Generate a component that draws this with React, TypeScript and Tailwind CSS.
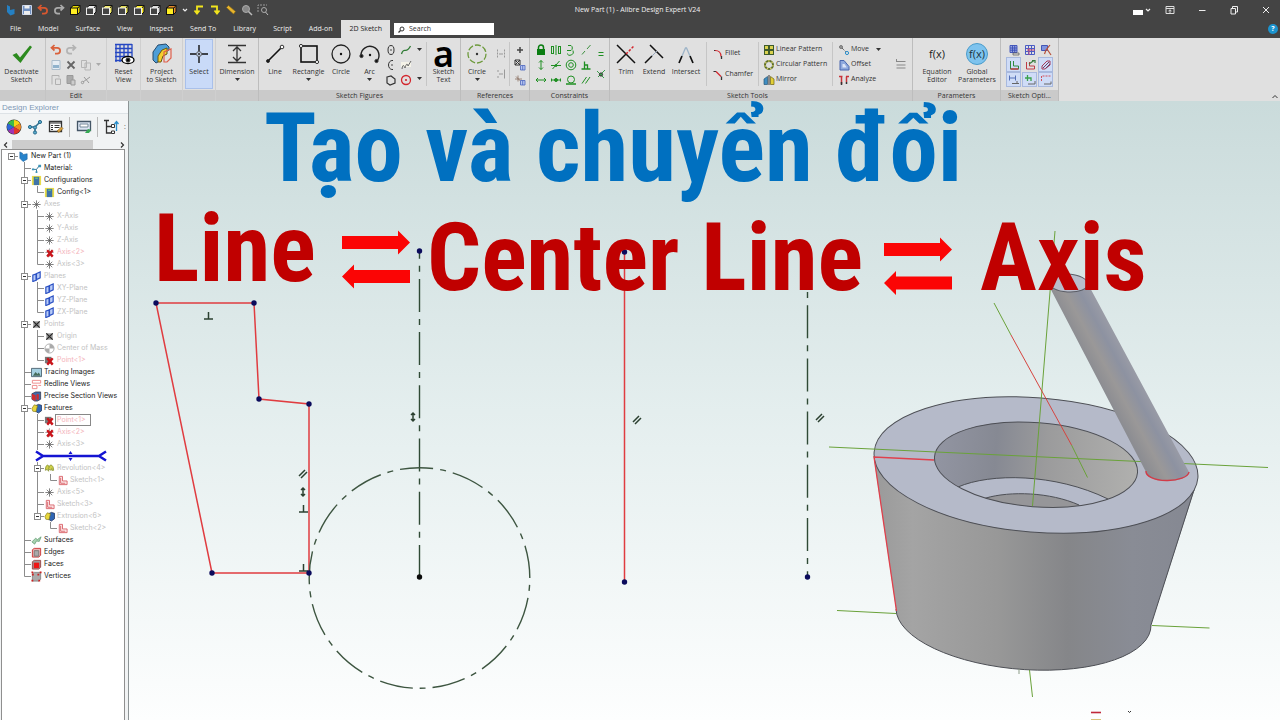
import type { ReactNode } from "react";
import clsx from "clsx";

type Kids = { children?: ReactNode };

/* ---------- icon helpers ---------- */

function Ic({ s = 12, vb = 12, children }: Kids & { s?: number; vb?: number }) {
  return (
    <svg width={s} height={s} viewBox={`0 0 ${vb} ${vb}`} fill="none" stroke="#333" aria-hidden className="shrink-0">
      {children}
    </svg>
  );
}

function Caret({ className }: { className?: string }) {
  return (
    <svg width="5" height="3" viewBox="0 0 5 3" aria-hidden className={clsx("shrink-0", className ?? "fill-[#333]")}>
      <path d="M0 0h5L2.5 3z" />
    </svg>
  );
}

function Cube({ face, top }: { face: string; top: string }) {
  return (
    <Ic>
      <path d="M4 4V1.5h7V8L8.500 10.500" fill={top} stroke="#111" />
      <path d="M1.500 4.500L4 1.500h7L8.500 4.500z" fill={top} stroke="#111" />
      <rect x="1.500" y="4" width="7" height="6.500" fill={face} stroke={face === "#444444" ? "#eee" : "#111"} />
    </Ic>
  );
}

const undo = <path d="M4.500 1L1.500 3.800l3 2.700M2 3.800h5.200a2.800 2.800 0 0 1 0 5.800H5" strokeWidth="1.700" />;
const redo = <path d="M7.500 1l3 2.800-3 2.700M10 3.800H4.800a2.800 2.800 0 0 0 0 5.800H7" strokeWidth="1.700" />;

const quickTools: [string, ReactNode][] = [
  ["Home", <Ic><path d="M2 1l3 1.500V6L9.500 5v5L5.500 11.500 2 8z" fill="#2580c3" stroke="none" /></Ic>],
  ["Save", <Ic><path d="M1.500 1.500h9v9h-9z" fill="#6f8fc0" stroke="#c9d5ea" /><path d="M3.500 1.500h5v3h-5zM3 7h6v3.500H3z" fill="#eee" stroke="none" /></Ic>],
  ["Undo", <Ic><g stroke="#d9572f">{undo}</g></Ic>],
  ["Redo", <Ic><g stroke="#aaa">{redo}</g></Ic>],
  ["Front", <Cube face="#ffee22" top="#e8d800" />],
  ["Back", <Cube face="#444444" top="#eeeeee" />],
  ["Left", <Cube face="#444444" top="#f3e96b" />],
  ["Right", <Cube face="#444444" top="#e6de55" />],
  ["Top", <Cube face="#444444" top="#ffee22" />],
  ["Bottom", <Cube face="#444444" top="#dddddd" />],
  ["Isometric", <Cube face="#ffee22" top="#e58a2b" />],
];

const quickTools2: [string, ReactNode][] = [
  ["Rotate left", <Ic><path d="M10 2.500H4V9M1.500 6.500L4 9.500l2.500-3" stroke="#f2e51d" strokeWidth="1.800" /></Ic>],
  ["Rotate right", <Ic><path d="M2 2.500h6V9M5.500 6.500L8 9.500l2.500-3" stroke="#f2e51d" strokeWidth="1.800" /></Ic>],
  ["Measure", <Ic><path d="M1.500 3.500l2-2 7 6-2 2.500z" fill="#e9b52d" stroke="#8a6a12" strokeWidth=".6" /></Ic>],
  ["Zoom", <Ic><circle cx="5" cy="5" r="3.500" fill="#888" stroke="#aaa" /><path d="M7.500 7.500L11 11" stroke="#bbb" strokeWidth="1.500" /></Ic>],
  ["Zoom window", <Ic><path d="M1 8V1h9" stroke="#999" strokeDasharray="2 1" /><circle cx="7" cy="6" r="2.500" stroke="#aaa" /><path d="M8.500 8L11 11" stroke="#bbb" /></Ic>],
];

/* ---------- ribbon building blocks ---------- */

function Group({ label, className, children }: Kids & { label?: string; className: string }) {
  return (
    <div className={clsx("flex shrink-0 flex-col", className)}>
      <div className="flex h-[52px]">{children}</div>
      <div className="h-[11px] truncate bg-[#cacaca] text-center leading-[11px]">{label}</div>
    </div>
  );
}

function Big({ icon, label, caret, active, className }: {
  icon: ReactNode; label: string; caret?: boolean; active?: boolean; className: string;
}) {
  return (
    <button
      type="button"
      className={clsx(
        "flex shrink-0 flex-col items-center whitespace-pre pt-1 text-center leading-[8px]",
        active && "my-px bg-[#c9daf8] pt-[3px] outline outline-1 -outline-offset-1 outline-[#a9c0ea]",
        className,
      )}
    >
      {icon}
      <span className="mt-0.5">{label}</span>
      {caret && <Caret className="mt-0.5 fill-[#333]" />}
    </button>
  );
}

function Small({ name, on, children }: Kids & { name: string; on?: boolean }) {
  return (
    <button
      type="button"
      aria-label={name}
      className={clsx(
        "flex h-[15px] w-[15px] items-center justify-center",
        on && "bg-[#cfdcf7] outline outline-1 -outline-offset-1 outline-[#a8b9de]",
      )}
    >
      {children}
    </button>
  );
}

function Wide({ icon, label, caret }: { icon: ReactNode; label: string; caret?: boolean }) {
  return (
    <button type="button" className="flex h-[15px] items-center gap-px whitespace-nowrap">
      {icon}
      <span>{label}</span>
      {caret && <Caret className="ml-1.5 fill-[#333]" />}
    </button>
  );
}

const Sep = () => <div className="my-1 w-px shrink-0 bg-[#c6c6c6]" />;

const green = "#1f8f22";

const constraints: [string, ReactNode][] = [
  ["Fix", <Ic><rect x="2" y="5" width="8" height="6" fill="#0a7d12" stroke="none" /><path d="M3.500 5V3.500a2.500 2.500 0 0 1 5 0V5" stroke="#0a7d12" strokeWidth="1.500" /></Ic>],
  ["Symmetric", <Ic><g stroke={green}><path d="M6 1v10" /><rect x="1.500" y="2.500" width="2" height="7" /><rect x="8.500" y="2.500" width="2" height="7" /></g></Ic>],
  ["Tangent", <Ic><g stroke={green}><path d="M3 1.500h3a3 3 0 0 1 0 5H2M8 6.500a3 3 0 0 1-6 3" /></g></Ic>],
  ["Collinear", <Ic><g stroke="#3c8f3e"><path d="M2 10.500L5 7M7 5l3.500-4" /></g></Ic>],
  ["Vertical", <Ic><g stroke={green}><path d="M6 1.500v9M4 3.500L6 1.500l2 2M4 8.500l2 2 2-2" /></g></Ic>],
  ["Coincident", <Ic><g stroke={green}><path d="M1 6.500h10M2.500 10l7-8" /><circle cx="6" cy="6.500" r="1" fill={green} /></g></Ic>],
  ["Concentric", <Ic><g stroke={green}><circle cx="6" cy="6" r="4.800" /><circle cx="6" cy="6" r="2.300" /></g></Ic>],
  ["Perpendicular", <Ic><g stroke={green} strokeWidth="1.300"><path d="M1.500 10h9M4.500 10V2.500M4.500 6h3v4" /></g></Ic>],
  ["Horizontal", <Ic><g stroke={green}><path d="M1 6h10M3 4L1 6l2 2M9 4l2 2-2 2" /></g></Ic>],
  ["Midpoint", <Ic><g stroke={green}><path d="M1 6h10" /><circle cx="6" cy="6" r="1.500" fill={green} /><path d="M1.500 4.500v3M10.500 4.500v3" /></g></Ic>],
  ["Tangent arc", <Ic><g stroke={green}><circle cx="6" cy="5.500" r="3.500" /><path d="M1 10h10" strokeWidth="1.500" /></g></Ic>],
  ["Parallel", <Ic><g stroke={green}><path d="M2 9.500L6.500 3M5.500 9.500L10 3" /></g></Ic>],
];

const netIcon = (line: string) => (
  <Ic>
    <path d="M2 1.500h7v7H2zM2 4h7M2 6.200h7M4.500 1.500v7M6.700 1.500v7" stroke={line} strokeWidth=".9" fill="#9aa6de" />
    <path d="M5 9h6v2H5z" stroke="#555" strokeWidth=".7" fill="#ddd" />
  </Ic>
);

const options: [string, boolean, ReactNode][] = [
  ["Snap to grid", false, netIcon("#3a4fb8")],
  ["Show grid", false, <Ic><path d="M1.500 1.500h9v9h-9zM1.500 4.500h9M1.500 7.500h9M4.500 1.500v9M7.500 1.500v9" stroke="#4b5cc4" /><path d="M5 4v7M3 6h8" stroke="#c04a7c" /></Ic>],
  ["Snap", false, <Ic><path d="M1.500 1.500h6v5h-6z" fill="#7f94df" stroke="#4356b5" /><path d="M10 1L6 6l-1.500 4M7 5l4 6" stroke="#b8503a" strokeWidth="1.200" /></Ic>],
  ["Figure display", true, <Ic><path d="M2.500 2v8h8V7h-5V2" stroke="#2d8a3d" /><path d="M2.500 10h8" stroke="#c03a44" strokeWidth="1.400" /></Ic>],
  ["Open ends", false, <Ic><path d="M2.500 3v7h8V7h-5V3" stroke="#c03a44" /><path d="M5 5l5-3.500M8 1.500h3V4" stroke="#3a7d3f" strokeWidth="1.200" /></Ic>],
  ["Hatching", true, <Ic><path d="M2 10V7l5-5h3v4l-5 4z" stroke="#a33a5a" /><path d="M3 9l6-6M6 9l4-4" stroke="#6b3f6b" /></Ic>],
  ["Dimensions", true, <Ic><path d="M1.500 1.500v5M7.500 1.500v5M1.500 4h6" stroke="#5571b8" /><path d="M4 9.500h7M9 7v3" stroke="#666" /></Ic>],
  ["Constraints", true, <Ic><path d="M3.500 1v6M1 4h6v3" stroke="#3aa24b" strokeWidth="1.300" /><path d="M4 10h7V7" stroke="#666" /></Ic>],
  ["Nodes", true, <Ic><path d="M1.500 7V2h9" stroke="#d0525c" strokeDasharray="2 1" /><path d="M4 10h7V7.500" stroke="#666" /></Ic>],
];

function Ribbon() {
  return (
    <div className="flex bg-[#e0e0e0]" role="toolbar" aria-label="2D Sketch">
      <Group className="w-[45px]">
        <Big className="w-[43px]" label={"Deactivate\nSketch"} icon={<Ic s={24} vb={24}><path d="M2.500 13l4-2 3.500 4.500L20 3.500l2 1.500L10.500 21z" fill="#2c8a1e" stroke="none" /></Ic>} />
      </Group>
      <div className="w-px bg-[#c4c4c4]" />
      <Group className="w-[60px]" label="Edit">
        <div className="grid grid-cols-3 content-start pl-[2px] pt-1">
          <Small name="Undo"><Ic><g stroke="#d9603a">{undo}</g></Ic></Small>
          <Small name="Redo"><Ic><g stroke="#b3b3b3">{redo}</g></Ic></Small>
          <span />
          <Small name="Properties"><Ic><path d="M2 1.500h8v9H2z" fill="#e4ecf3" stroke="#aabccb" /><path d="M3 6h6v3H3z" fill="#8fb2cc" stroke="none" /></Ic></Small>
          <Small name="Delete"><Ic><path d="M2.500 2.500l7 7M9.500 2.500l-7 7" stroke="#666" strokeWidth="1.800" /></Ic></Small>
          <Small name="Copy"><Ic><path d="M1.500 1.500h5v7h-5zM5 4h5.500v7H5z" fill="#e0e0e0" stroke="#b5b5b5" /></Ic></Small>
          <Small name="Paste"><Ic><path d="M2 10.500V1.500h7v2M5.500 5h5v5.500h-5z" stroke="#b0b0b0" /></Ic></Small>
          <Small name="Paste special"><Ic><path d="M2 1.500h6v8H2z" fill="#aaa" stroke="#999" /><path d="M6 6h4v5H6z" fill="#ccc" stroke="#999" /></Ic></Small>
          <Small name="Cut"><Ic><path d="M10 3L3 8M4 3l5 6" stroke="#999" /><circle cx="2.500" cy="8.500" r="1.200" stroke="#999" /></Ic></Small>
        </div>
        <Caret className="ml-[3px] mt-[25px] fill-[#aaa]" />
      </Group>
      <div className="w-px bg-[#cfcfcf]" />
      <Group className="w-[33px]">
        <Big className="w-full" label={"Reset\nView"} icon={
          <Ic s={24} vb={24}>
            <path d="M3 2.500h17M3 6.500h17M3 10.500h17M3 14.500h12M3 18.500h8M4 2v18M8 2v18M12 2v14M16 2v13M20 2v13" stroke="#2446c2" strokeWidth="1.300" />
            <ellipse cx="16" cy="18" rx="6" ry="3.500" fill="#fff" stroke="#000" strokeWidth="1.300" /><circle cx="16" cy="18" r="2" fill="#000" />
          </Ic>} />
      </Group>
      <div className="w-px bg-[#cfcfcf]" />
      <Group className="w-[41px]">
        <Big className="w-full" label={"Project\nto Sketch"} icon={
          <Ic s={24} vb={24}>
            <path d="M3 18V10l5-7 8-1 3 3v3l-6 3-5 9-2 1z" fill="#4d9ed8" stroke="#274a6b" />
            <path d="M8 20V14l4-6 5-2v6l-4 2-2 6z" fill="#f5cf2f" stroke="#6a5a10" />
            <path d="M14 20V10l7-3v9l-4 4z" stroke="#e0604c" strokeWidth="1.200" />
          </Ic>} />
      </Group>
      <div className="w-px bg-[#cfcfcf]" />
      <Group className="w-[32px]">
        <Big active className="mx-0.5 w-[28px]" label="Select" icon={
          <Ic s={24} vb={24}><path d="M12 3v6M12 15v6M3 12h6M15 12h6" stroke="#111" strokeWidth="1.400" /><circle cx="12" cy="12" r="2.500" stroke="#555" /><circle cx="12" cy="12" r=".7" fill="#333" /></Ic>} />
      </Group>
      <div className="w-px bg-[#cfcfcf]" />
      <Group className="w-[42px]">
        <Big className="w-full" label="Dimension" caret icon={
          <Ic s={24} vb={24}><path d="M3 3.500h18M3 20.500h18M12 5v14M8 9l4-4 4 4M8 15l4 4 4-4" stroke="#333" strokeWidth="1.300" /></Ic>} />
      </Group>
      <div className="w-px bg-[#bdbdbd]" />

      <Group className="w-[201px]" label="Sketch Figures">
        <Big className="w-[32px]" label="Line" icon={<Ic s={24} vb={24}><path d="M5 19L19 5" stroke="#111" strokeWidth="1.600" /><circle cx="5" cy="19" r="1.500" fill="#111" /><circle cx="19" cy="5" r="1.800" fill="#fff" /></Ic>} />
        <Big className="w-[35px]" label="Rectangle" caret icon={<Ic s={24} vb={24}><rect x="4" y="4" width="16" height="16" stroke="#111" strokeWidth="1.600" /><circle cx="4" cy="4" r="1.600" fill="#fff" /><circle cx="20" cy="20" r="1.600" fill="#fff" /></Ic>} />
        <Big className="w-[30px]" label="Circle" icon={<Ic s={24} vb={24}><circle cx="12" cy="12" r="9" stroke="#222" strokeWidth="1.300" /><circle cx="12" cy="12" r="1.200" fill="#111" stroke="none" /></Ic>} />
        <Big className="w-[27px]" label="Arc" caret icon={<Ic s={24} vb={24}><path d="M3 13a9 9 0 1 1 16 6" stroke="#222" strokeWidth="1.400" /><circle cx="3.500" cy="14" r="1.600" fill="#111" /><circle cx="18.500" cy="19" r="1.600" fill="#111" /><circle cx="12" cy="13" r="1.200" fill="#111" stroke="none" /></Ic>} />
        <div className="grid grid-cols-2 content-start pt-1">
          <Small name="Ellipse"><Ic><ellipse cx="6" cy="6" rx="3" ry="4.500" /><circle cx="6" cy="6" r=".8" fill="#333" stroke="none" /></Ic></Small>
          <Small name="Spline"><Ic><path d="M1.500 10C4 2 6 11 10.500 2" stroke="#2f7b35" strokeWidth="1.300" /></Ic></Small>
          <Small name="Elliptical arc"><Ic><path d="M8 1.500C2 1 2 11 8 10.500" /><circle cx="7" cy="6" r=".8" fill="#333" stroke="none" /></Ic></Small>
          <Small name="Sketch image"><Ic><path d="M1 3h10v5H1z" fill="#f5f3e8" stroke="none" /><path d="M2 10c1-6 2-3 3-1 1-3 2-6 3-2l3-5" stroke="#666" /></Ic></Small>
          <Small name="Polygon"><Ic><path d="M2 3l4-1 4 3v4l-5 2-3-2z" strokeWidth="1.200" /></Ic></Small>
          <Small name="Point"><Ic><circle cx="6" cy="6" r="4.500" stroke="#d3262d" strokeWidth="1.300" /><circle cx="6" cy="6" r="1.100" fill="#d3262d" stroke="none" /></Ic></Small>
        </div>
        <div className="flex w-[13px] flex-col items-center justify-between py-[10px]"><Caret /><Caret /></div>
        <Sep />
        <Big className="w-[33px]" label={"Sketch\nText"} icon={<span className="h-6 font-['Noto_Sans','Open_Sans',sans-serif] text-[36px] font-semibold leading-[23px] text-black">a</span>} />
      </Group>
      <div className="w-px bg-[#bdbdbd]" />

      <Group className="w-[68px]" label="References">
        <Big className="w-[32px]" label="Circle" caret icon={<Ic s={24} vb={24}><circle cx="12" cy="12" r="9" stroke="#6d9a3c" strokeWidth="1.300" strokeDasharray="6 2" /><circle cx="12" cy="12" r="1.200" fill="#333" stroke="none" /></Ic>} />
        <div className="flex w-[16px] flex-col items-center gap-[5px] pt-2">
          <Small name="Reference line"><Ic><path d="M2.500 1.500v9M9.500 1.500v9" stroke="#999" strokeDasharray="2 1" /><path d="M4 6h4" stroke="#999" /></Ic></Small>
          <Small name="Reference node"><Ic><path d="M2 3h2M2 9h2M9.500 1.500v9" stroke="#999" /><path d="M4 6h4" stroke="#999" /></Ic></Small>
        </div>
        <Sep />
        <div className="flex w-[19px] flex-col items-center pt-1">
          <Small name="Node"><Ic><path d="M6 3v6M3 6h6" stroke="#444" strokeWidth="1.500" /></Ic></Small>
          <Small name="Project point"><Ic><path d="M1 1h5v5H1zM1 1l5 5M6 1L1 6" stroke="#333" /><path d="M6.500 6.500h4.500v4.500H6.500zM8.700 6.500v4.500" fill="#b8c6f0" stroke="#4a64be" strokeWidth=".8" /></Ic></Small>
          <Small name="Project axis"><Ic><path d="M1 5h7M4 1.500v6M2 2.500l5 5" stroke="#8a6e60" strokeWidth=".8" /><path d="M6.500 6.500h4.500v4.500H6.500zM8.700 6.500v4.500" fill="#b8c6f0" stroke="#4a64be" strokeWidth=".8" /></Ic></Small>
        </div>
      </Group>
      <div className="w-px bg-[#bdbdbd]" />

      <Group className="w-[79px]" label="Constraints">
        <div className="grid grid-cols-4 content-start pl-[3px] pt-1">
          {constraints.map(([name, icon]) => <Small key={name} name={name}>{icon}</Small>)}
        </div>
        <div className="flex flex-col items-center gap-[5px] pt-2">
          <Small name="Equal"><Ic><path d="M3.500 4.500h5M3.500 7.500h5" stroke={green} strokeWidth="1.200" /></Ic></Small>
          <Small name="Auto constrain"><Ic><path d="M2 3l7 7M10 2L3 9" stroke="#3aa04a" /><circle cx="6" cy="6.500" r="1.600" fill="#3aa04a" /></Ic></Small>
        </div>
      </Group>
      <div className="w-px bg-[#bdbdbd]" />

      <Group className="w-[275px]" label="Sketch Tools">
        <Big className="w-[32px]" label="Trim" icon={<Ic s={24} vb={24}><path d="M3 3l18 18M3 21l9-9" stroke="#111" strokeWidth="1.500" /><path d="M12 12l8-8" stroke="#d3262d" strokeWidth="1.500" strokeDasharray="2.500 1.500" /></Ic>} />
        <Big className="w-[24px]" label="Extend" icon={<Ic s={24} vb={24}><path d="M8 3l13 13M3 21l7-7" stroke="#111" strokeWidth="1.500" /><path d="M10 14l5-5" stroke="#9aaac0" /></Ic>} />
        <Big className="w-[40px]" label="Intersect" icon={<Ic s={24} vb={24}><path d="M5 21l3-7M19 21l-3-7" stroke="#111" strokeWidth="1.700" /><path d="M8 14l3.500-8h1L16 14" stroke="#9db4c8" strokeWidth="1.300" /></Ic>} />
        <Sep />
        <div className="flex w-[51px] flex-col gap-[6px] pl-[5px] pt-2">
          <Wide label="Fillet" icon={<Ic><path d="M2 2.500h2" /><path d="M3 2.500c4 0 6 2 6 6" stroke="#d3262d" strokeWidth="1.200" /><path d="M9.500 8v3" strokeWidth="1.300" /></Ic>} />
          <Wide label="Chamfer" icon={<Ic><path d="M1.500 2.500H4" /><path d="M4 2.500l5 5" stroke="#d3262d" strokeWidth="1.200" /><path d="M9.500 7.500v3.500" strokeWidth="1.300" /></Ic>} />
        </div>
        <Sep />
        <div className="flex w-[73px] flex-col pl-1 pt-1">
          <Wide label="Linear Pattern" icon={<Ic><path d="M1 1h10v10H1z" fill="#3d5a2c" stroke="none" /><path d="M2 2h3v3H2zM7 2h3v3H7zM2 7h3v3H2zM7 7h3v3H7z" fill="#d9d14e" stroke="none" /></Ic>} />
          <Wide label="Circular Pattern" icon={<Ic><circle cx="6" cy="6" r="4" stroke="#5b6b2a" strokeWidth="2" /><circle cx="6" cy="6" r="4" stroke="#d6d267" strokeWidth="1.300" strokeDasharray="1.500 2" /></Ic>} />
          <Wide label="Mirror" icon={<Ic><path d="M1 10.500V5l3.500-2.500v8z" fill="#3f8dc2" stroke="#275877" strokeWidth=".7" /><path d="M6 1v10" /><path d="M11 10.500V5L7.500 2.500v8z" fill="#e2cf36" stroke="#6b6215" strokeWidth=".7" /></Ic>} />
        </div>
        <Sep />
        <div className="flex flex-col pl-[5px] pt-1">
          <Wide label="Move" caret icon={<Ic><circle cx="3" cy="3" r="1.500" fill="#999" stroke="#777" /><path d="M4 4l4 4" strokeDasharray="1 1" /><circle cx="9" cy="9" r="1.600" stroke="#2b8fcb" /></Ic>} />
          <Wide label="Offset" icon={<Ic><path d="M2 1.500h4l5 6v3.500H2z" fill="#8fa9dd" stroke="#4a67ae" /><path d="M4.500 5h2l2 3v.5h-4z" fill="#dde5f8" stroke="none" /></Ic>} />
          <Wide label="Analyze" icon={<Ic><path d="M1 2.500h3.500M3.500 2.500V10M8 2.500h3M8.500 2.500V8" stroke="#c8343a" strokeWidth="1.500" /><path d="M3.500 8v3M8.500 8v2" strokeWidth="1.500" /></Ic>} />
        </div>
      </Group>
      <Group className="w-[27px]">
        <div className="flex w-full items-center justify-end pr-1">
          <Small name="Align"><Ic><path d="M1.500 1v3M1.500 3.500h9M1.500 7h9M1.500 10h9" stroke="#888" /></Ic></Small>
        </div>
      </Group>
      <div className="w-px bg-[#bdbdbd]" />

      <Group className="w-[87px]" label="Parameters">
        <Big className="ml-1 w-[40px]" label={"Equation\nEditor"} icon={<span className="h-6 text-[11px] leading-[24px] text-[#222]">f(x)</span>} />
        <Big className="w-[40px]" label={"Global\nParameters"} icon={<span className="h-6 py-px"><span className="block h-[22px] w-[22px] rounded-full border border-[#4a9ccb] bg-[#7ec3ee] text-[11px] leading-[20px] text-[#1c3340]">f(x)</span></span>} />
      </Group>
      <div className="w-px bg-[#bdbdbd]" />
      <Group className="w-[57px]" label="Sketch Opti...">
        <div className="grid grid-cols-3 content-start gap-x-px pl-[5px] pt-1">
          {options.map(([name, on, icon]) => <Small key={name} name={name} on={on}>{icon}</Small>)}
        </div>
      </Group>
      <div className="w-px bg-[#bdbdbd]" />
      <div className="flex flex-1 items-end justify-end pr-px">
        <button type="button" aria-label="Collapse ribbon"><Ic s={8} vb={8}><path d="M1.500 5L4 2.500 6.500 5" /></Ic></button>
      </div>
    </div>
  );
}

/* ---------- window header ---------- */

const tabs = ["File", "Model", "Surface", "View", "Inspect", "Send To", "Library", "Script", "Add-on", "2D Sketch"];

function TitleBar() {
  return (
    <header className="bg-[#444444] text-[#f0f0f0]">
      <div className="flex h-5 items-center">
        <div className="flex flex-1 items-center pl-[3px]">
          {quickTools.map(([name, icon]) => (
            <button key={name} type="button" aria-label={name} className="flex w-4 justify-center">{icon}</button>
          ))}
          <button type="button" aria-label="Customize" className="flex w-3 justify-center"><Ic s={8} vb={8}><path d="M2 3l2 2 2-2" stroke="#eee" strokeWidth="1.200" /></Ic></button>
          {quickTools2.map(([name, icon]) => (
            <button key={name} type="button" aria-label={name} className="flex w-4 justify-center">{icon}</button>
          ))}
        </div>
        <h1>New Part (1) - Alibre Design Expert V24</h1>
        <div className="flex flex-1 items-center justify-end gap-5 pr-2">
          <button type="button" aria-label="Style" className="flex items-center">
            <span className="mt-1 block h-[5px] w-2.5 bg-white" />
            <Ic s={9} vb={9}><path d="M3 3l2 2 2-2" stroke="#eee" strokeWidth="1.200" /></Ic>
          </button>
          <button type="button" aria-label="Ribbon display" className="-ml-2"><Ic><path d="M2 2.500h8v7H2zM2 4.500h8M6 9V6M4.500 7L6 5.800 7.500 7" stroke="#ddd" /></Ic></button>
          <button type="button" aria-label="Minimize"><Ic><path d="M3 6.500h6.500" stroke="#eee" /></Ic></button>
          <button type="button" aria-label="Restore"><Ic><path d="M3 4.500h4.500V10H3zM4.500 4V2.500H9.500V8H8" stroke="#eee" /></Ic></button>
          <button type="button" aria-label="Close"><Ic><path d="M3 3l6 6M9 3L3 9" stroke="#eee" /></Ic></button>
        </div>
      </div>
      <div className="flex h-[18px] items-stretch pl-0.5">
        <nav className="flex gap-px" aria-label="Ribbon tabs">
          {tabs.map((t) => (
            <button key={t} type="button" className={clsx("px-2 leading-[18px]", t === "2D Sketch" && "bg-[#e0e0e0] text-[#222]")}>
              {t}
            </button>
          ))}
        </nav>
        <label className="my-[3px] ml-1 flex w-[100px] items-center gap-1 bg-white px-1">
          <Ic s={7} vb={7}><circle cx="4" cy="3" r="2" /><path d="M2.500 4.500L.5 6.500" strokeWidth="1.300" /></Ic>
          <input type="text" aria-label="Search" placeholder="Search" className="w-full bg-transparent text-[7px] text-black outline-none placeholder:text-[#333]" />
        </label>
        <button type="button" aria-label="Help" className="my-auto ml-auto mr-0.5 h-2.5 w-2.5 rounded-full bg-[#1c94cf] text-[7px] font-bold leading-[10px] text-white">?</button>
      </div>
    </header>
  );
}

/* ---------- design explorer ---------- */

const axis = (c = "#555") => <path d="M6 1.500v9M1.500 6h9M3 3l6 6M9 3l-6 6" stroke={c} strokeWidth=".8" />;
const cross = <path d="M3.500 3.500l6 7M9.500 3.500l-6 7" stroke="#c9151b" strokeWidth="2.600" />;

const treeIcons: Record<string, ReactNode> = {
  part: <path d="M2 1l3 1.500V4l5-1v6l-4.500 2.500L2 8z" fill="#2683cb" stroke="#17609c" strokeWidth=".6" />,
  material: <><path d="M2 7h4l3-4M6 7v3" stroke="#2f7392" /><path d="M1 6h2.500v2H1zM8 2h3v2.500H8zM5 9h2v2H5z" fill="#3d93b8" stroke="none" /></>,
  config: <><path d="M1 1h10v10H1z" fill="#e8dc4a" stroke="none" /><path d="M3 2h6v9H3z" fill="#3f74a8" stroke="none" /><path d="M4.500 3.500h3" stroke="#7be06a" /></>,
  axis: axis(),
  axisX: <>{axis("#888")}{cross}</>,
  plane: <><path d="M2 4.500L6 3v7l-4 1.500zM5.500 3L10 1v6.500L5.500 9.500z" fill="#b9ccf7" stroke="#2c52c4" strokeWidth="1.300" /></>,
  point: <><path d="M2.500 2.500h7v7h-7z" fill="#999" stroke="none" /><path d="M2.500 2.500l7 7M9.500 2.500l-7 7" stroke="#222" strokeWidth="1.200" /></>,
  pointX: <><path d="M1 2h7v7H1z" fill="#777" stroke="none" />{cross}</>,
  mass: <><circle cx="6" cy="6" r="5" fill="#fff" stroke="#aaa" /><path d="M6 1a5 5 0 0 1 5 5H6zM6 11a5 5 0 0 1-5-5h5z" fill="#aaa" stroke="none" /></>,
  image: <><path d="M.500 1.500h11v9H.500z" fill="#a5cfe0" stroke="#4d6472" /><path d="M2 9.500l3-4 2 2 1.500-1.500 2 3.500z" fill="#466b5b" stroke="none" /></>,
  redline: <path d="M1.500 1.500h9v3h-9zM1.500 7h5v3.500h-5zM8 7h3" stroke="#e88" />,
  section: <><path d="M1 3l4-2h5.500v8L7 11H4L1 9z" fill="#3f6aa8" stroke="#223" strokeWidth=".7" /><path d="M1 3l4 1.500V11L1 9z" fill="#d32c2c" stroke="none" /><path d="M6 3.500h2.500v6H6z" fill="#d32c2c" stroke="none" /></>,
  feature: <><path d="M5 3l3-1.500 3.500 1v6L8 11 5 9z" fill="#2f66b5" stroke="#1a2c55" strokeWidth=".8" /><path d="M1 6l2.500-4L7 3 5.500 9.500 2 9z" fill="#e7d63c" stroke="#85781a" strokeWidth=".7" /></>,
  revolve: <path d="M1.500 8c0-7 4-7 4-3 0-4 5-4 5 3L8.500 8V6L7 8 5 6v3L3.500 7z" fill="#cfd04a" stroke="#7f8a2c" strokeWidth=".8" />,
  sketch: <><path d="M2.500 1.500h3.500v5h5v4h-8.500z" fill="#fdeaea" stroke="#d9646a" /><path d="M4 3v6h5" stroke="#d9646a" /></>,
  surface: <path d="M1 7.500l4-4 2 1.500 4-3-2 5-3-.500L4 10z" fill="#a9d3b1" stroke="#5f9a70" strokeWidth=".8" />,
  edges: <><path d="M1.500 3l2-1.500h7V9l-2 2h-7z" fill="#ecb5b5" stroke="#c33" /><path d="M3.500 4h5v6h-5z" fill="#aaa" stroke="#777" /></>,
  faces: <><path d="M1.500 3l2-1.500h7V9l-2 2h-7z" fill="#999" stroke="#944" /><path d="M3 4h6v6H3z" fill="#f01414" stroke="none" /></>,
  vertices: <><path d="M1.500 3l2-1.500h7V9l-2 2h-7z" fill="#aaa" stroke="#888" /><path d="M1.500 1.500h0M10.500 1.500h0M1.500 10.500h0M9 10.500h0M2 4h0M8 4h0" stroke="#c22" strokeWidth="2" strokeLinecap="square" /></>,
};

type Tone = "normal" | "dim" | "error";
type TreeNode = { label: string; icon: string; tone?: Tone; selected?: boolean; kids?: TreeNode[] };

const tones: Record<Tone, string> = {
  normal: "text-[#222]",
  dim: "text-[#c2c2c2]",
  error: "text-[#f4b4bb]",
};

const tree: TreeNode = {
  label: "New Part (1)", icon: "part", kids: [
    { label: "Material:", icon: "material" },
    { label: "Configurations", icon: "config", kids: [{ label: "Config<1>", icon: "config" }] },
    { label: "Axes", icon: "axis", tone: "dim", kids: [
      { label: "X-Axis", icon: "axis", tone: "dim" },
      { label: "Y-Axis", icon: "axis", tone: "dim" },
      { label: "Z-Axis", icon: "axis", tone: "dim" },
      { label: "Axis<2>", icon: "axisX", tone: "error" },
      { label: "Axis<3>", icon: "axis", tone: "dim" },
    ] },
    { label: "Planes", icon: "plane", tone: "dim", kids: [
      { label: "XY-Plane", icon: "plane", tone: "dim" },
      { label: "YZ-Plane", icon: "plane", tone: "dim" },
      { label: "ZX-Plane", icon: "plane", tone: "dim" },
    ] },
    { label: "Points", icon: "point", tone: "dim", kids: [
      { label: "Origin", icon: "point", tone: "dim" },
      { label: "Center of Mass", icon: "mass", tone: "dim" },
      { label: "Point<1>", icon: "pointX", tone: "error" },
    ] },
    { label: "Tracing Images", icon: "image" },
    { label: "Redline Views", icon: "redline" },
    { label: "Precise Section Views", icon: "section" },
    { label: "Features", icon: "feature", kids: [
      { label: "Point<1>", icon: "pointX", tone: "error", selected: true },
      { label: "Axis<2>", icon: "axisX", tone: "error" },
      { label: "Axis<3>", icon: "axis", tone: "dim" },
      { label: "", icon: "rollback" },
      { label: "Revolution<4>", icon: "revolve", tone: "dim", kids: [{ label: "Sketch<1>", icon: "sketch", tone: "dim" }] },
      { label: "Axis<5>", icon: "axis", tone: "dim" },
      { label: "Sketch<3>", icon: "sketch", tone: "dim" },
      { label: "Extrusion<6>", icon: "feature", tone: "dim", kids: [{ label: "Sketch<2>", icon: "sketch", tone: "dim" }] },
    ] },
    { label: "Surfaces", icon: "surface" },
    { label: "Edges", icon: "edges" },
    { label: "Faces", icon: "faces" },
    { label: "Vertices", icon: "vertices" },
  ],
};

function Guide({ d, box }: { d: string; box?: boolean }) {
  return (
    <svg width="13" height="12" viewBox="0 0 13 12" fill="none" stroke="#8c8c8c" aria-hidden className="shrink-0">
      <path d={d} />
      {box && <><rect x="3.500" y="3.500" width="6" height="6" fill="#fff" /><path d="M5 6.500h3" stroke="#333" /></>}
    </svg>
  );
}

// `trail` says, for every ancestor level, whether its guide line runs on below.
function Branch({ node, trail, last, root }: { node: TreeNode; trail: boolean[]; last: boolean; root?: boolean }) {
  const own = root ? "M6.500 6.500h6.500" : last ? "M6.500 0v6.500h6.500" : "M6.500 0v12M6.500 6.500h6.500";
  return (
    <li>
      <div className="flex h-3 items-center">
        {trail.map((on, i) => <Guide key={i} d={on ? "M6.500 0v12" : ""} />)}
        {node.icon === "rollback" ? (
          <svg width="74" height="12" viewBox="0 0 74 12" fill="none" stroke="#1414d2" strokeWidth="2.500" className="ml-1" aria-hidden>
            <path d="M1 1.500L8 6l-7 4.500M71 1.500L64 6l7 4.500M6 6h60" />
            <path d="M33.500 4L35.500 1l2 3zM33.500 8l2 3 2-3z" fill="#1414d2" stroke="none" />
          </svg>
        ) : (
          <>
            <Guide d={own} box={!!node.kids} />
            <Ic s={11}>{treeIcons[node.icon]}</Ic>
            <span className={clsx("ml-px whitespace-nowrap px-px leading-[10px]", tones[node.tone ?? "normal"], node.selected && "pr-1 outline outline-1 outline-[#888]")}>
              {node.label}
            </span>
          </>
        )}
      </div>
      {node.kids && (
        <ul>
          {node.kids.map((k, i) => (
            <Branch key={k.label + i} node={k} trail={root ? [false] : [...trail, !last]} last={i === node.kids!.length - 1} />
          ))}
        </ul>
      )}
    </li>
  );
}

function Explorer() {
  const rule = <span className="h-5 w-px bg-[#bbb]" />;
  return (
    <aside className="flex w-[129px] shrink-0 flex-col border-r border-[#8d9496] bg-[#f1f3f4]">
      <h2 className="h-[12px] bg-[#f6f8fa] pl-0.5 font-['Liberation_Sans',Arial,sans-serif] text-[8px] leading-[13px] text-[#7f98b6]">Design Explorer</h2>
      <div className="flex h-[27px] items-center justify-between border-t border-[#dde2e6] pl-1.5 pr-0.5">
        <button type="button" aria-label="Colors">
          <svg width="16" height="16" viewBox="0 0 16 16" aria-hidden>
            <circle cx="8" cy="8" r="7.500" fill="#333" />
            <path d="M8 8V1a7 7 0 0 1 6 3.500z" fill="#f5d516" /><path d="M8 8l6-3.500a7 7 0 0 1 0 7z" fill="#f08a24" />
            <path d="M8 8l6 3.500A7 7 0 0 1 8 15z" fill="#e2352c" /><path d="M8 8v7a7 7 0 0 1-6-3.500z" fill="#a035b5" />
            <path d="M8 8l-6 3.500a7 7 0 0 1 0-7z" fill="#2f65d8" /><path d="M8 8L2 4.500A7 7 0 0 1 8 1z" fill="#3dbb48" />
          </svg>
        </button>
        <button type="button" aria-label="Material"><Ic s={16} vb={16}><path d="M3 8h5l5-5M8 8v5" stroke="#2d6e8e" strokeWidth="1.500" /><g fill="#57a9cb" stroke="#2d6e8e"><circle cx="3" cy="8" r="1.600" /><circle cx="8" cy="8.500" r="1.600" /><circle cx="13" cy="3" r="1.600" /><circle cx="8" cy="13.500" r="1.600" /></g></Ic></button>
        <button type="button" aria-label="Properties"><Ic s={16} vb={16}><path d="M1.500 2.500h12v10h-12z" fill="#fff" strokeWidth="1.300" /><path d="M1.500 4h12M3 6.500h2M6.500 6.500h5M3 8.500h2M6.500 8.500h5M3 10.500h2" /><path d="M9 12l4.500-4 1.500 1.500-4 4z" fill="#e0a43a" stroke="#7a5618" strokeWidth=".6" /></Ic></button>
        {rule}
        <button type="button" aria-label="Redline"><Ic s={16} vb={16}><path d="M1.500 2.500h13v9h-13z" fill="#dbe5f3" stroke="#456" strokeWidth="1.300" /><path d="M4 5h8v3H4z" fill="#fff" stroke="#789" /><path d="M9 14l3-4 3 1-2 3z" fill="#35a852" stroke="none" /></Ic></button>
        {rule}
        <button type="button" aria-label="Expand"><Ic s={16} vb={16}><path d="M3.500 1v13h5M3.500 7.500h5M1 1.500h5" strokeWidth="1.300" /><path d="M8.500 5.500h3v3h-3zM8.500 12h3v2.500h-3z" fill="#fff" /><path d="M13.500 12V3M11.500 5l2-2.500 2 2.500" stroke="#2b8fcb" strokeWidth="1.300" /></Ic></button>
        <span className="text-[#555]">:</span>
      </div>
      <div className="flex h-[9px] items-center justify-between px-0.5">
        <Ic s={8} vb={8}><path d="M5 1.500L2.500 4 5 6.500" strokeWidth="1.200" /></Ic>
        <span className="mr-auto ml-0.5 h-[9px] w-[81px] bg-[#cdcdcd]" />
        <Ic s={8} vb={8}><path d="M3 1.500L5.500 4 3 6.500" strokeWidth="1.200" /></Ic>
      </div>
      <nav aria-label="Design tree" className="mr-[3px] ml-px flex-1 border border-b-0 border-[#8f8f8f] bg-white pl-[3px] font-[Inter,'Liberation_Sans',sans-serif]">
        <ul><Branch node={tree} trail={[]} last root /></ul>
      </nav>
    </aside>
  );
}

/* ---------- sketch canvas ---------- */

const nodes = [[156, 303], [254, 303], [259, 399], [309, 404], [309, 573], [212, 573], [419.5, 251], [624.5, 252], [624.5, 582], [807.5, 577]];
const perps = [[208, 319], [303, 512], [303, 571]];
const parallels = [[303, 474], [637, 420], [820, 418]];
const verticals = [[303, 492], [413, 417]];

function Scene() {
  return (
    <svg viewBox="129 101 1151 619" preserveAspectRatio="xMidYMin meet" className="absolute inset-0 h-full w-full" fill="none" role="img" aria-label="Sketch and solid model">
      <defs>
        <linearGradient id="side" x1="874" x2="1197" y1="0" y2="0" gradientUnits="userSpaceOnUse">
          <stop offset="0" stopColor="#9a9a9a" /><stop offset=".12" stopColor="#a4a4a4" /><stop offset=".38" stopColor="#989898" />
          <stop offset=".6" stopColor="#858689" /><stop offset=".8" stopColor="#898c95" /><stop offset="1" stopColor="#858892" />
        </linearGradient>
        <linearGradient id="bore" x1="934" x2="1137" y1="0" y2="0" gradientUnits="userSpaceOnUse">
          <stop offset="0" stopColor="#9295a2" /><stop offset=".3" stopColor="#868993" /><stop offset=".55" stopColor="#9b9b9c" /><stop offset="1" stopColor="#b0b0ae" />
        </linearGradient>
        <linearGradient id="rod" x1="1098" y1="380" x2="1131" y2="362" gradientUnits="userSpaceOnUse">
          <stop offset="0" stopColor="#8c8d92" /><stop offset=".35" stopColor="#9a9898" /><stop offset=".7" stopColor="#8d92a1" /><stop offset="1" stopColor="#9a9ca6" />
        </linearGradient>
        <clipPath id="inner"><ellipse cx="1036" cy="464.700" rx="101.800" ry="42.100" transform="rotate(4.500 1036 464.700)" /></clipPath>
      </defs>

      {/* profile sketch */}
      <path d="M156 303H254L259 399L309 404V573H212Z" stroke="#e03c40" strokeWidth="1.500" />
      <path d="M419.500 251V577" stroke="#2f4a35" strokeWidth="1.400" strokeDasharray="33 7 6 7.200" strokeDashoffset="25.300" />
      <circle cx="419.500" cy="578" r="110.300" stroke="#3d5540" strokeWidth="1.400" strokeDasharray="0 7 6 7 33.300 0" />
      <path d="M624.500 252V581" stroke="#e03c40" strokeWidth="1.500" />
      <path d="M807.500 252V577" stroke="#2f4a35" strokeWidth="1.400" strokeDasharray="33 7 6 7.200" />
      <g stroke="#2b4030" strokeWidth="1.500">
        {perps.map(([x, y], i) => <path key={i} d={`M${x - 4} ${y}h9M${x + 0.5} ${y}v-7`} />)}
        {parallels.map(([x, y], i) => <path key={i} d={`M${x - 4} ${y + 2}l6 -6M${x - 2} ${y + 4}l6 -6`} />)}
        {verticals.map(([x, y], i) => <path key={i} d={`M${x} ${y - 4}v8M${x - 2} ${y - 2}l2 -2l2 2M${x - 2} ${y + 2}l2 2l2 -2`} />)}
      </g>
      {nodes.map(([x, y], i) => <circle key={i} cx={x} cy={y} r="2.700" fill="#0b0b5c" />)}
      <circle cx="419.500" cy="577" r="2.700" fill="#0a0a0a" />

      {/* solid */}
      <path d="M873.600 456L896 609A127.800 52.400 4.600 0 0 1151 625L1195 488L1036 465Z" fill="url(#side)" />
      <path d="M896 609A127.800 52.400 4.600 0 0 1151 625L1194 490" stroke="#4d4f55" />
      <ellipse cx="1036" cy="465" rx="162.400" ry="67.200" transform="rotate(4.600 1036 465)" fill="#b5bac9" stroke="#4d4f55" />
      <ellipse cx="1036" cy="464.700" rx="101.800" ry="42.100" transform="rotate(4.500 1036 464.700)" fill="url(#bore)" />
      <g clipPath="url(#inner)" stroke="#4d4f55">
        <path d="M940 500L958 487C990 473 1055 473 1108 499L1108 530H940Z" fill="#b5bac9" />
        <path d="M975 502L986 498C1010 491 1050 492 1079 505L1090 530H975Z" fill="#969699" />
      </g>
      <ellipse cx="1036" cy="464.700" rx="101.800" ry="42.100" transform="rotate(4.500 1036 464.700)" stroke="#4d4f55" />
      <g stroke="#6aa23a">
        <path d="M829 447L1268 467.500M1055 231L1032.500 506M837 610.500L896 613.500M1152 625.500L1209.500 628M1029.500 670L1032.500 697" />
        <path d="M994 303L1011 335M1071.500 445L1087.500 477.500" />
      </g>
      <path d="M1019 669v5" stroke="#8b9b86" />
      <path d="M1011 335L1071.500 445" stroke="#d5443f" />
      <path d="M1048 284L1146 472A21.500 9 0 0 0 1189 472L1088 284Z" fill="url(#rod)" />
      <ellipse cx="1068" cy="283" rx="20" ry="9" transform="rotate(4 1068 283)" fill="#b9bdcb" stroke="#5b5d66" />
      <path d="M1146 471A21.500 9 0 0 0 1189 472" stroke="#d23b48" strokeWidth="1.400" />
      <path d="M934 460L874 457L896.500 611" stroke="#e0404c" strokeWidth="1.300" />
      <path d="M1091 712.500H1101" stroke="#c0283a" strokeWidth="1.600" />
      <path d="M1091 719.500H1101" stroke="#d9c27a" />
      <path d="M1128 711L1129.500 712.500L1131 711" stroke="#333" />

      {/* swap arrows between the captions */}
      <g fill="#fb0505">
        <path d="M342 236H398V230.500L410 242.500L398 254.500V249H342Z" />
        <path d="M410 270H354V264.500L342 276.500L354 288.500V283H410Z" />
        <path d="M884 243H940V237.500L952 249.500L940 261.500V256H884Z" />
        <path d="M952 276.500H896V271L884 283L896 295V289.500H952Z" />
      </g>
    </svg>
  );
}

function Canvas() {
  return (
    <main className="relative min-w-0 flex-1 bg-linear-to-b from-[#cadbdb] via-[#e4eeee] via-50% to-[#fdfefe]">
      <Scene />
      <div className="whitespace-nowrap font-['Liberation_Sans_Narrow','Arial_Narrow','Roboto_Condensed','Liberation_Sans',sans-serif] text-[95px] font-bold leading-none text-[#c00000]">
        <p className="absolute left-[135px] top-[-1px] text-[97px] text-[#0070c0]">Tạo và chuyển đổi</p>
        <p className="absolute left-[25px] top-[100px]">Line</p>
        <p className="absolute left-[298px] top-[109px]">Center Line</p>
        <p className="absolute left-[851px] top-[109px]">Axis</p>
      </div>
    </main>
  );
}

export default function App() {
  return (
    <div className="flex h-screen min-h-[600px] flex-col overflow-hidden font-['Open_Sans','Noto_Sans',sans-serif] text-[7px] text-[#333]">
      <TitleBar />
      <Ribbon />
      <div className="flex min-h-0 flex-1">
        <Explorer />
        <Canvas />
      </div>
    </div>
  );
}
